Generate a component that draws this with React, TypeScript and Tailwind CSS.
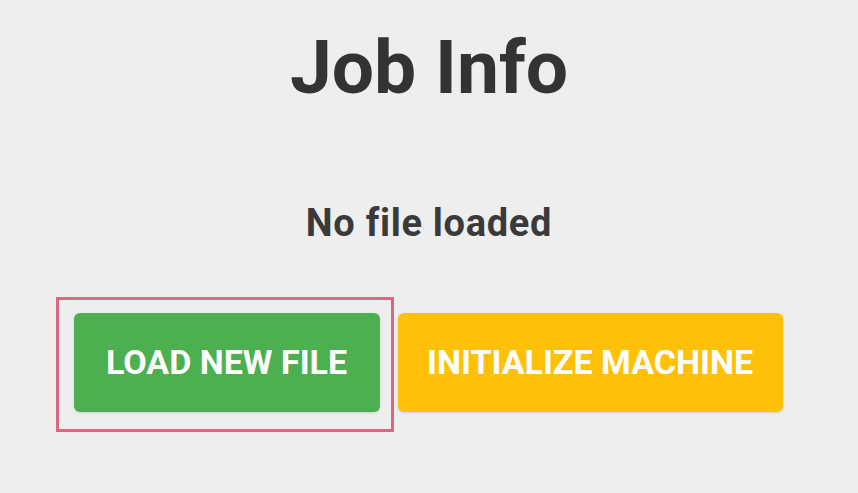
export default function App() {
  return (
    <div
      className="w-[858px] h-[493px] bg-[#eeeeee] flex flex-col items-center"
      style={{ fontFamily: "Roboto, 'Liberation Sans', sans-serif" }}
    >
      {/* Title */}
      <h1 className="mt-[22px] text-[75px] leading-[90px] font-bold text-[#333333]">
        Job Info
      </h1>

      {/* Status */}
      <p className="mt-[90px] text-[38px] leading-[42px] font-bold text-[#3a3a3a] tracking-[0.7px]">
        No file loaded
      </p>

      {/* Actions */}
      <div className="mt-[53px] mr-[20px] flex items-start gap-[4px]">
        <div className="border-[3px] border-[#dc6684] pt-[13px] pb-[17px] pl-[15px] pr-[11px]">
          <button className="w-[306px] h-[99px] rounded-[6px] bg-[#4caf50] text-white text-[34px] font-bold shadow-sm">
            LOAD NEW FILE
          </button>
        </div>
        <button className="mt-[16px] w-[385px] h-[99px] rounded-[6px] bg-[#ffc107] text-white text-[34px] font-bold shadow-sm">
          INITIALIZE MACHINE
        </button>
      </div>
    </div>
  );
}
